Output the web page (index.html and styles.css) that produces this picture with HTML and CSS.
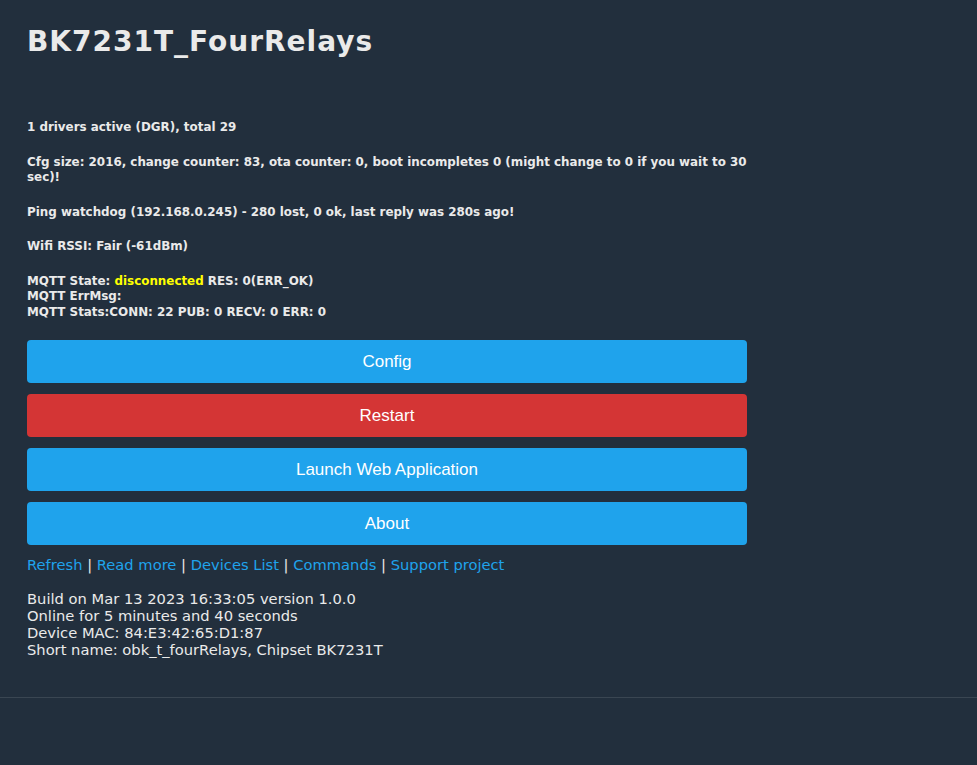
FILE: index.html
```html
<!DOCTYPE html>
<html>

	<head>
		<meta charset="UTF-8">
		<title>BK7231T_FourRelays</title>
		<link rel="stylesheet" href="styles.css">
	</head>

	<body>
		<div class="main">
			<div class="page">
				<h1>BK7231T_FourRelays</h1>

				<div class="state">
					<h5>1 drivers active (DGR), total 29</h5>
					<h5>Cfg size: 2016, change counter: 83, ota counter: 0, boot incompletes 0 (might change to 0 if you wait to 30 sec)!</h5>
					<h5>Ping watchdog (192.168.0.245) - 280 lost, 0 ok, last reply was 280s ago!</h5>
					<h5>Wifi RSSI: Fair (-61dBm)</h5>
					<h5>MQTT State: <span class="warn">disconnected</span> RES: 0(ERR_OK)<br>MQTT ErrMsg: <br>MQTT Stats:CONN: 22 PUB: 0 RECV: 0 ERR: 0</h5>
				</div>

				<div class="buttons">
					<button class="btn">Config</button>
					<button class="btn bred">Restart</button>
					<button class="btn">Launch Web Application</button>
					<button class="btn">About</button>
				</div>

				<div class="links">
					<a href="##">Refresh</a> | <a href="##">Read more</a> | <a href="##">Devices List</a> | <a href="##">Commands</a> | <a href="##">Support project</a>
				</div>

				<div class="info">
					Build on Mar 13 2023 16:33:05 version 1.0.0<br>
					Online for 5 minutes and 40 seconds<br>
					Device MAC: 84:E3:42:65:D1:87<br>
					Short name: obk_t_fourRelays, Chipset BK7231T
				</div>
			</div>
		</div>
	</body>

</html>
```

FILE: styles.css
```css
* {
	margin: 0;
	padding: 0;
}

html {
	background: #212e3b;
}

body {
	font-family: "DejaVu Sans", Verdana, sans-serif;
	color: #eaeaea;
	background: #222f3d;
	min-height: 100vh;
}

.main {
	background: #222f3d;
	border-bottom: 1px solid #3a4652;
	padding: 0 0 39px;
}

.page {
	width: 720px;
	padding: 0 27px;
}

h1 {
	font-size: 28px;
	font-weight: bold;
	letter-spacing: 1px;
	line-height: 34px;
	padding-top: 25px;
}

.state {
	padding: 61px 0 1px;
}

.state h5 {
	font-size: 11.9px;
	font-weight: bold;
	line-height: 15.5px;
	margin-bottom: 19px;
}

.state .warn {
	color: #ffff00;
}

.buttons {
	display: flex;
	flex-direction: column;
	gap: 11px;
}

.btn {
	display: block;
	width: 100%;
	height: 43px;
	border: 0;
	border-radius: 4px;
	background: #1fa3ec;
	color: #fff;
	font-family: "Liberation Sans", Arial, sans-serif;
	font-size: 17px;
	cursor: pointer;
}

.btn.bred {
	background: #d43535;
}

.links {
	font-size: 14.7px;
	line-height: 17px;
	margin-top: 11px;
}

.links a {
	color: #1fa3ec;
	text-decoration: none;
}

.info {
	font-size: 14.7px;
	line-height: 17px;
	margin-top: 17px;
}
```
